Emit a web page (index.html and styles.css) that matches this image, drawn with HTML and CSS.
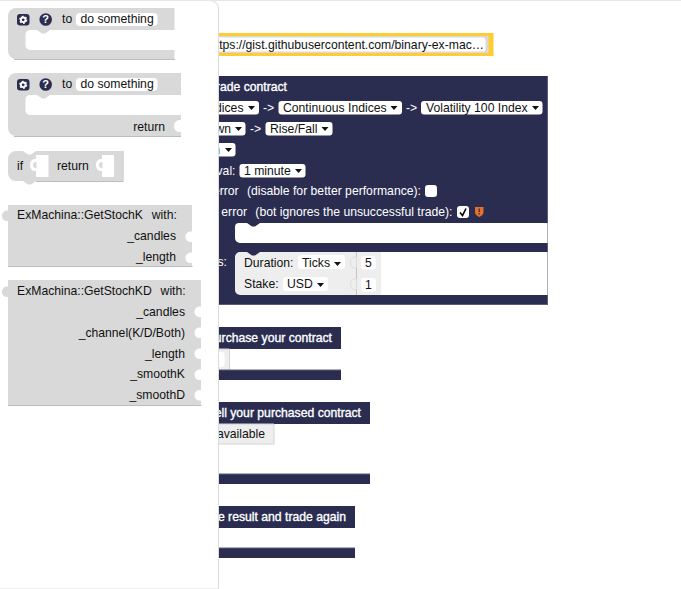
FILE: index.html
```html
<!DOCTYPE html>
<html>
<head>
<meta charset="utf-8">
<title>Blocks</title>
<link rel="stylesheet" href="styles.css">
</head>
<body>
<main class="workspace">
<svg class="canvas" width="681" height="589" viewBox="0 0 681 589">
  <!-- URL block -->
  <rect class="selected" x="150" y="33" width="343.500" height="23"/>
  <rect class="block-gray" x="150" y="36" width="338.500" height="17"/>
  <rect class="field" x="150" y="37.500" width="335.500" height="14" rx="3"/>
  <text class="t" x="484" y="49" text-anchor="end">https://gist.githubusercontent.com/binary-ex-mac…</text>

  <!-- Trade block -->
  <path class="navy" d="M150 76H547.500V305H150Z"/>
  <path class="navy-edge" d="M150 304.500H547.500M547.500 76V305"/>
  <text class="tw b" x="287" y="91" text-anchor="end">trade contract</text>

  <rect class="field" x="150" y="101" width="109" height="13.500" rx="3"/>
  <text class="t" x="243.500" y="112" text-anchor="end">Indices</text><path class="arrow" d="M248 106H255L251.500 110Z"/>
  <text class="tw" x="263" y="112">-&gt;</text>
  <rect class="field" x="278.500" y="101" width="123.500" height="13.500" rx="3"/>
  <text class="t" x="283" y="112">Continuous Indices</text><path class="arrow" d="M390.500 106H397.500L394 110Z"/>
  <text class="tw" x="406" y="112">-&gt;</text>
  <rect class="field" x="421" y="101" width="121.500" height="13.500" rx="3"/>
  <text class="t" x="426" y="112">Volatility 100 Index</text><path class="arrow" d="M532 106H539L535.500 110Z"/>

  <rect class="field" x="150" y="122" width="95.500" height="13.500" rx="3"/>
  <text class="t" x="231" y="133" text-anchor="end">Down</text><path class="arrow" d="M235 127H242L238.500 131Z"/>
  <text class="tw" x="250" y="133">-&gt;</text>
  <rect class="field" x="265.500" y="122" width="67" height="13.500" rx="3"/>
  <text class="t" x="270" y="133">Rise/Fall</text><path class="arrow" d="M321.500 127H328.500L325 131Z"/>

  <rect class="field" x="150" y="143" width="85.500" height="13.500" rx="3"/>
  <text class="t" x="220" y="154" text-anchor="end">Both</text><path class="arrow" d="M225 148H232L228.500 152Z"/>

  <text class="tw" x="235.500" y="175" text-anchor="end">Interval:</text>
  <rect class="field" x="239.500" y="164" width="66" height="13.500" rx="3"/>
  <text class="t" x="244" y="175">1 minute</text><path class="arrow" d="M295 169H302L298.500 173Z"/>

  <text class="tw" x="421" y="195" text-anchor="end">error<tspan dx="1.500">  (disable for better performance):</tspan></text>
  <rect class="field" x="425" y="185" width="12" height="12" rx="3"/>

  <text class="tw" x="452.500" y="216" text-anchor="end">error<tspan dx="1.500">  (bot ignores the unsuccessful trade):</tspan></text>
  <rect class="field" x="457" y="206" width="12" height="12" rx="3"/>
  <path class="check" d="M460 212.500L462.500 215.500L466 208.500"/>
  <path class="shield" d="M475 207H483.500V212.500C483.500 214.500 481 216 479.250 217C477.500 216 475 214.500 475 212.500Z"/>
  <path class="shield-mark" d="M479.250 208.500V212M479.250 213V214.500"/>

  <path class="field" d="M239 223H247L252 226.500H255L260 223H547.500V243H240A5 5 0 0 1 235 238V227A4 4 0 0 1 239 223Z"/>

  <text class="tw" x="227" y="266" text-anchor="end">Options:</text>
  <path class="field" d="M381 252H547.500V295H381Z"/>
  <path class="light" d="M240 252H247L252 255.500H255L260 252H381V295H240A5 5 0 0 1 235 290V257A5 5 0 0 1 240 252Z"/>
  <path class="tick" d="M356.500 252V295"/>
  <path class="tick-notch" d="M356.500 257C352.500 256.500 350.500 259 350.500 262.500C350.500 266 352.500 268.500 356.500 268M356.500 279C352.500 278.500 350.500 281 350.500 284.500C350.500 288 352.500 290.500 356.500 290"/>
  <text class="t" x="244" y="266.500">Duration:</text>
  <rect class="field" x="298" y="255" width="47" height="14" rx="3"/>
  <text class="t" x="302" y="266.500">Ticks</text><path class="arrow" d="M334 262H341L337.500 266Z"/>
  <rect class="field" x="361" y="256" width="15" height="13.500" rx="3"/>
  <text class="t" x="368.500" y="267" text-anchor="middle">5</text>
  <text class="t" x="244" y="288">Stake:</text>
  <rect class="field" x="283" y="277" width="45" height="14" rx="3"/>
  <text class="t" x="287" y="288">USD</text><path class="arrow" d="M317 283H324L320.500 287Z"/>
  <rect class="field" x="361" y="278" width="15" height="13.500" rx="3"/>
  <text class="t" x="368.500" y="288.500" text-anchor="middle">1</text>

  <!-- Purchase block -->
  <path class="navy" d="M150 327H341V349H150Z"/>
  <text class="tw b" x="332" y="342" text-anchor="end">purchase your contract</text>
  <path class="light-edge" d="M150 349H229.500V371H150Z"/>
  <rect class="field" x="150" y="352" width="74.500" height="15" rx="3"/>
  <path class="navy" d="M150 370H341V380H150Z"/>
  <path class="navy-edge" d="M150 370H341"/>

  <!-- Sell block -->
  <path class="navy" d="M150 402H370V424H150Z"/>
  <text class="tw b" x="361" y="417" text-anchor="end">sell your purchased contract</text>
  <path class="light-edge" d="M150 424H274V444H150Z"/>
  <text class="t" x="265" y="438" text-anchor="end">not available</text>
  <path class="navy" d="M150 474H370V484H150Z"/>
  <path class="navy-edge" d="M150 474H370"/>

  <!-- Result block -->
  <path class="navy" d="M150 506H355V528H150Z"/>
  <text class="tw b" x="346" y="521" text-anchor="end">the result and trade again</text>
  <path class="navy" d="M150 548H355V558H150Z"/>
  <path class="navy-edge" d="M150 548H355"/>
</svg>

<aside class="flyout">
<svg class="canvas" width="220" height="589" viewBox="0 0 220 589">
  <path class="panel" d="M-2 0.500H210A8 8 0 0 1 218.500 9V589H-2Z"/>

  <!-- to do something -->
  <g>
    <path class="gray" d="M16 8H174.500V30H50L45 33.500H42L37 30H30A5 5 0 0 0 25.500 35V45A5 5 0 0 0 30 50H174.500V59H16A8 8 0 0 1 8 51V16A8 8 0 0 1 16 8Z"/>
    <path class="edge" d="M14 59.500H175"/>
    <rect class="navy" x="17" y="14" width="12.500" height="11.500" rx="3"/>
    <circle class="cog-ring" cx="23.200" cy="19.800" r="2.300"/><circle class="cog-teeth" cx="23.200" cy="19.800" r="3.500"/>
    <circle class="navy" cx="45.700" cy="19.500" r="6.300"/>
    <text class="help" x="45.700" y="23.300" text-anchor="middle">?</text>
    <text class="t" x="62" y="23">to</text>
    <rect class="field" x="76" y="13" width="81.500" height="13" rx="4"/>
    <text class="t" x="80.500" y="23">do something</text>
  </g>

  <!-- to do something return -->
  <g>
    <path class="gray" d="M16 73H181V95H50L45 98.500H42L37 95H30A5 5 0 0 0 25.500 100V110A5 5 0 0 0 30 115H181V120C177 119.500 174 122 174 126C174 130 177 132.500 181 132V136H16A8 8 0 0 1 8 128V81A8 8 0 0 1 16 73Z"/>
    <path class="edge" d="M14 136.500H181"/>
    <rect class="navy" x="17" y="79" width="12.500" height="11.500" rx="3"/>
    <circle class="cog-ring" cx="23.200" cy="84.800" r="2.300"/><circle class="cog-teeth" cx="23.200" cy="84.800" r="3.500"/>
    <circle class="navy" cx="45.700" cy="84.500" r="6.300"/>
    <text class="help" x="45.700" y="88.300" text-anchor="middle">?</text>
    <text class="t" x="62" y="88">to</text>
    <rect class="field" x="76" y="78" width="81.500" height="13" rx="4"/>
    <text class="t" x="80.500" y="88">do something</text>
    <text class="t" x="165" y="130.500" text-anchor="end">return</text>
  </g>

  <!-- if return -->
  <g>
    <path class="gray" d="M16 151H23L28 154.500H31L36 151H122.500V181H36L31 184.500H28L23 181H16A8 8 0 0 1 8 173V159A8 8 0 0 1 16 151Z"/>
    <path class="edge" d="M36 181.500H123M123 151V182"/>
    <path class="panel-fill" d="M48.500 155H36V159C32.500 158.500 30 161 30 165C30 169 32.500 171.500 36 171V177H48.500Z"/>
    <path class="gray" d="M36.500 162C34 161.500 33 163 33 165C33 167 34 168.500 36.500 168Z"/>
    <path class="panel-fill" d="M114 155H102V159C98.500 158.500 96 161 96 165C96 169 98.500 171.500 102 171V177H114Z"/>
    <path class="gray" d="M102.500 162C100 161.500 99 163 99 165C99 167 100 168.500 102.500 168Z"/>
    <text class="t" x="17" y="170">if</text>
    <text class="t" x="57" y="170">return</text>
  </g>

  <!-- GetStochK -->
  <g>
    <path class="gray" d="M8 205H192V231.500C188.500 231 185.500 233 185.500 236.800C185.500 240.500 188.500 242.500 192 242V252.500C188.500 252 185.500 254 185.500 257.800C185.500 261.500 188.500 263.500 192 263V266H8V221C5 221.500 2 219.500 2 215.800C2 212 5 210 8 210.500Z"/>
    <path class="edge" d="M8 266.500H192.500"/>
    <text class="t" x="17" y="219">ExMachina::GetStochK<tspan dx="2">  with:</tspan></text>
    <text class="t" x="176" y="240" text-anchor="end">_candles</text>
    <text class="t" x="176" y="261" text-anchor="end">_length</text>
  </g>

  <!-- GetStochKD -->
  <g>
    <path class="gray" d="M8 280H201V306.500C197.500 306 194.500 308 194.500 311.800C194.500 315.500 197.500 317.500 201 317V327.500C197.500 327 194.500 329 194.500 332.800C194.500 336.500 197.500 338.500 201 338V348.500C197.500 348 194.500 350 194.500 353.800C194.500 357.500 197.500 359.500 201 359V369.500C197.500 369 194.500 371 194.500 374.800C194.500 378.500 197.500 380.500 201 380V390C197.500 389.500 194.500 391.500 194.500 395.300C194.500 399 197.500 401 201 400.500V405H8V297C5 297.500 2 295.500 2 291.800C2 288 5 286 8 286.500Z"/>
    <path class="edge" d="M8 405.500H201.500"/>
    <text class="t" x="17" y="295">ExMachina::GetStochKD<tspan dx="2">  with:</tspan></text>
    <text class="t" x="185" y="316" text-anchor="end">_candles</text>
    <text class="t" x="185" y="337" text-anchor="end">_channel(K/D/Both)</text>
    <text class="t" x="185" y="357.500" text-anchor="end">_length</text>
    <text class="t" x="185" y="378" text-anchor="end">_smoothK</text>
    <text class="t" x="185" y="399" text-anchor="end">_smoothD</text>
  </g>
</svg>
</aside>
</main>
</body>
</html>
```
FILE: styles.css
```css
html, body { margin: 0; padding: 0; background: #fff; }
body { width: 681px; height: 589px; overflow: hidden; }
.workspace { position: relative; width: 681px; height: 589px; border-top: 1px solid #e6e6e6; box-sizing: border-box; overflow: hidden; }
.canvas { display: block; position: absolute; left: 0; top: -1px; }
.flyout { position: absolute; left: 0; top: 0; width: 220px; height: 589px; }

.t, .tw, .help { font-family: "Liberation Sans", Arial, sans-serif; font-size: 12.2px; white-space: pre; }
.t { fill: #111; }
.tw { fill: #fff; }
.b { stroke: #fff; stroke-width: 0.35px; }
.help { fill: #fff; font-weight: 700; font-size: 11px; }

.selected { fill: #fc3; }
.block-gray { fill: #d9d9d9; }
.field { fill: #fff; }
.navy { fill: #2a2d50; }
.navy-edge { stroke: #5a5c7c; stroke-width: 1; fill: none; }
.arrow { fill: #111; }
.check { fill: none; stroke: #000; stroke-width: 1.600; }
.shield { fill: #e36f2b; }
.shield-mark { stroke: #2a2d50; stroke-width: 1.200; fill: none; }
.light { fill: #eee; }
.light-edge { fill: #eee; stroke: #d4d4d4; stroke-width: 1; }
.tick { stroke: #c4c4c4; stroke-width: 1; fill: none; }
.tick-notch { stroke: #ddd; stroke-width: 1; fill: #eee; }

.panel { fill: #fff; stroke: #dcdcdc; stroke-width: 1; }
.panel-fill { fill: #fff; }
.gray { fill: #d9d9d9; }
.edge { stroke: #bdbdbd; stroke-width: 1; fill: none; }
.cog-ring { fill: none; stroke: #fff; stroke-width: 1.800; }
.cog-teeth { fill: none; stroke: #fff; stroke-width: 1.200; stroke-dasharray: 1.800 1.860; }
```
